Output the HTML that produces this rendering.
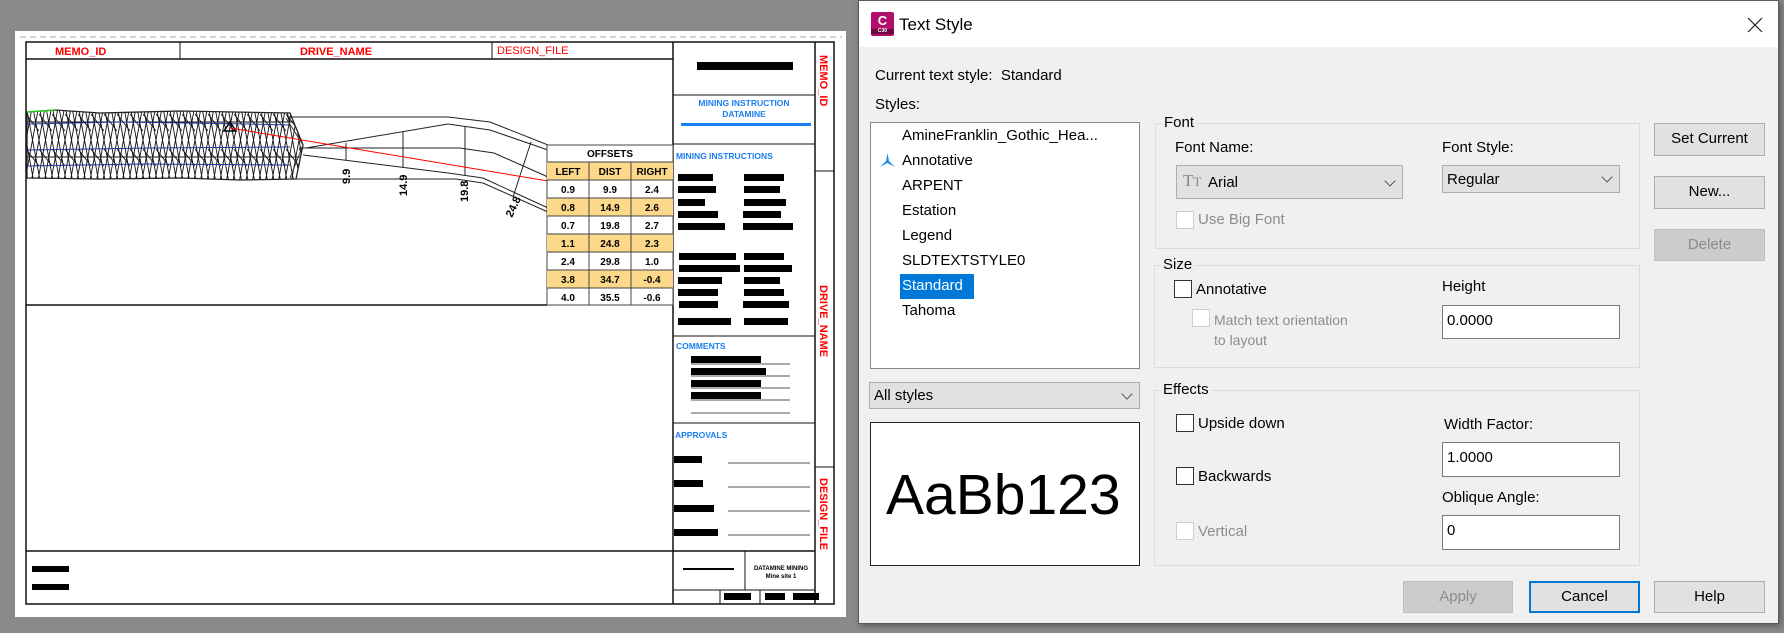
<!DOCTYPE html>
<html><head><meta charset="utf-8"><style>
*{margin:0;padding:0;box-sizing:border-box}
body{width:1784px;height:633px;background:#8a8a8a;position:relative;overflow:hidden;font-family:"Liberation Sans",sans-serif}
.a{position:absolute}
#dlg{left:858px;top:0;width:921px;height:624px;background:#f0f0f0;border:1px solid #5a5a5a;box-shadow:2px 2px 6px rgba(0,0,0,.35)}
#tb{left:0;top:0;width:919px;height:46px;background:#fff}
.t{position:absolute;font-size:15px;color:#000;white-space:nowrap;line-height:18px}
.g{color:#8c8c8c}
.grp{position:absolute;border:1px solid #dcdcdc}
.lbl{position:absolute;top:-10px;left:6px;background:#f0f0f0;padding:0 2px;font-size:15px;line-height:18px}
.cb{position:absolute;width:18px;height:18px;border:1px solid #333;background:#fff}
.cbd{border-color:#cfcfcf}
.in{position:absolute;background:#fff;border:1px solid #7a7a7a;font-size:15px;padding:6px 0 0 4px}
.btn{position:absolute;background:#e1e1e1;border:1px solid #adadad;font-size:15px;text-align:center;line-height:30px}
.cmb{position:absolute;background:#e1e1e1;border:1px solid #adadad;font-size:15px}
.chev{position:absolute;right:8px;top:7px;width:8px;height:8px;border-right:1px solid #555;border-bottom:1px solid #555;transform:rotate(45deg)}
</style></head><body>
<svg class="a" style="left:0;top:0" width="858" height="633" viewBox="0 0 858 633">
<defs>
<pattern id="tri" width="13" height="35" patternUnits="userSpaceOnUse">
<path d="M0 0L6.5 35L13 0M0 35L6.5 0L13 35M0 17L13 17M0 9L13 26" stroke="#111" stroke-width="0.9" fill="none"/>
</pattern>
<clipPath id="cl"><path d="M27 112L55 110L100 113L180 111L290 113L303 145L296 179L240 180L180 178L100 179L27 178Z"/></clipPath>
</defs>
<rect x="15" y="31" width="831" height="586" fill="#fff"/>
<line x1="20" y1="37" x2="842" y2="37" stroke="#aaa" stroke-dasharray="6,4"/>
<g stroke="#111" fill="none">
<rect x="26" y="42" width="808" height="562" stroke-width="1.5"/>
<line x1="26" y1="59" x2="673" y2="59" stroke-width="1.5"/>
<line x1="180" y1="42" x2="180" y2="59"/>
<line x1="492" y1="42" x2="492" y2="59"/>
<line x1="673" y1="42" x2="673" y2="604" stroke-width="1.5"/>
<line x1="815" y1="42" x2="815" y2="604" stroke-width="1.5"/>
<line x1="815" y1="171" x2="834" y2="171"/>
<line x1="815" y1="467" x2="834" y2="467"/>
<line x1="673" y1="95" x2="815" y2="95"/>
<line x1="673" y1="144" x2="815" y2="144"/>
<line x1="673" y1="336" x2="815" y2="336"/>
<line x1="673" y1="423" x2="815" y2="423"/>
<line x1="26" y1="305" x2="547" y2="305" stroke-width="1.5"/>
<line x1="26" y1="551" x2="815" y2="551" stroke-width="1.5"/>
<line x1="745" y1="551" x2="745" y2="590"/>
<line x1="673" y1="590" x2="815" y2="590"/>
<line x1="720" y1="590" x2="720" y2="604"/>
<line x1="760" y1="590" x2="760" y2="604"/>
</g>
<g font-family="Liberation Sans" font-weight="bold" font-size="11" fill="#f00">
<text x="55" y="55">MEMO_ID</text>
<text x="336" y="55" text-anchor="middle">DRIVE_NAME</text>
<text x="497" y="54" font-weight="normal">DESIGN_FILE</text>
<text transform="translate(820,55) rotate(90)">MEMO_ID</text>
<text transform="translate(820,285) rotate(90)">DRIVE_NAME</text>
<text transform="translate(820,478) rotate(90)">DESIGN_FILE</text>
</g>
<rect x="20" y="105" width="290" height="80" fill="url(#tri)" clip-path="url(#cl)"/>
<path d="M27 112L55 110L100 113L180 111L290 113L303 145L296 179L240 180L180 178L100 179L27 178Z" fill="none" stroke="#222" stroke-width="1.3"/>
<path d="M27 124L120 122L250 124L290 125M27 150L150 148L290 147M27 166L140 164L290 165" stroke="#223399" fill="none" stroke-width="1"/>
<path d="M27 112L55 110" stroke="#2c2" stroke-width="1.5"/>
<path d="M286 118L303 145L290 178" stroke="#333" fill="none"/>
<polygon points="230,122 236,131 224,131" fill="none" stroke="#000" stroke-width="1.5"/>
<g stroke="#222" fill="none" stroke-width="1">
<path d="M287 117L448 117L490 122L548 145"/>
<path d="M306 148L448 124L490 130L548 150"/>
<path d="M299 148L460 148L494 153L548 177"/>
<path d="M303 155L448 173L483 178L548 208"/>
<path d="M291 179L456 179L483 183L548 212"/>
<path d="M346 143L346 160M403 132L403 167M465 126L465 175M531 142L513 197"/>
</g>
<path d="M230 128L548 181" stroke="#f00" stroke-width="1"/>
<g font-family="Liberation Sans" font-weight="bold" font-size="11" fill="#000">
<text transform="translate(350,184) rotate(-90)">9.9</text>
<text transform="translate(407,196) rotate(-90)">14.9</text>
<text transform="translate(468,202) rotate(-90)">19.8</text>
<text transform="translate(512,218) rotate(-65)">24.8</text>
</g>
<rect x="547" y="145" width="126" height="160" fill="#fff" stroke="#444"/>
<g fill="#fcd98a"><rect x="547" y="162" width="126" height="18"/><rect x="547" y="198" width="126" height="18"/><rect x="547" y="234" width="126" height="18"/><rect x="547" y="270" width="126" height="18"/></g>
<g stroke="#444" fill="none">
<path d="M547 162H673M547 180H673M547 198H673M547 216H673M547 234H673M547 252H673M547 270H673M547 288H673M589 162V305M631 162V305"/>
</g>
<g font-family="Liberation Sans" font-weight="bold" font-size="10" fill="#000" text-anchor="middle">
<text x="610" y="157">OFFSETS</text>
<text x="568" y="175">LEFT</text><text x="610" y="175">DIST</text><text x="652" y="175">RIGHT</text>
<text x="568" y="193">0.9</text><text x="610" y="193">9.9</text><text x="652" y="193">2.4</text>
<text x="568" y="211">0.8</text><text x="610" y="211">14.9</text><text x="652" y="211">2.6</text>
<text x="568" y="229">0.7</text><text x="610" y="229">19.8</text><text x="652" y="229">2.7</text>
<text x="568" y="247">1.1</text><text x="610" y="247">24.8</text><text x="652" y="247">2.3</text>
<text x="568" y="265">2.4</text><text x="610" y="265">29.8</text><text x="652" y="265">1.0</text>
<text x="568" y="283">3.8</text><text x="610" y="283">34.7</text><text x="652" y="283">-0.4</text>
<text x="568" y="301">4.0</text><text x="610" y="301">35.5</text><text x="652" y="301">-0.6</text>
</g>
<g fill="#000">
<rect x="697" y="62" width="96" height="8"/>
<rect x="678" y="174" width="35" height="7"/><rect x="678" y="186" width="38" height="7"/><rect x="678" y="199" width="27" height="7"/><rect x="678" y="211" width="40" height="7"/><rect x="678" y="223" width="47" height="7"/>
<rect x="744" y="174" width="40" height="7"/><rect x="744" y="186" width="36" height="7"/><rect x="744" y="199" width="42" height="7"/><rect x="743" y="211" width="38" height="7"/><rect x="743" y="223" width="50" height="7"/>
<rect x="679" y="253" width="57" height="7"/><rect x="679" y="265" width="61" height="7"/><rect x="678" y="277" width="44" height="7"/><rect x="678" y="289" width="40" height="7"/><rect x="679" y="301" width="39" height="7"/><rect x="678" y="318" width="53" height="7"/>
<rect x="744" y="253" width="40" height="7"/><rect x="744" y="265" width="48" height="7"/><rect x="744" y="277" width="36" height="7"/><rect x="744" y="289" width="40" height="7"/><rect x="743" y="301" width="46" height="7"/><rect x="744" y="318" width="44" height="7"/>
<rect x="691" y="356" width="70" height="7"/><rect x="691" y="368" width="75" height="7"/><rect x="691" y="380" width="70" height="7"/><rect x="691" y="392" width="70" height="7"/>
<rect x="674" y="456" width="28" height="7"/><rect x="674" y="480" width="29" height="7"/><rect x="674" y="505" width="40" height="7"/><rect x="674" y="529" width="44" height="7"/>
<rect x="32" y="566" width="37" height="6"/><rect x="32" y="584" width="37" height="6"/>
<rect x="724" y="593" width="27" height="7"/><rect x="765" y="593" width="20" height="7"/><rect x="793" y="593" width="26" height="7"/>
</g>
<g stroke="#777" stroke-width="1.2">
<path d="M691 364H790M691 376H790M691 388H790M691 400H790M691 413H790M728 463H810M728 487H810M728 511H810M728 535H810"/>
</g>
<rect x="681" y="123" width="130" height="3" fill="#1a7ff0"/>
<line x1="683" y1="569" x2="734" y2="569" stroke="#000" stroke-width="2"/>
<g font-family="Liberation Sans" font-weight="bold" font-size="8.5" fill="#1a7ff0">
<text x="744" y="106" text-anchor="middle">MINING INSTRUCTION</text>
<text x="744" y="117" text-anchor="middle">DATAMINE</text>
<text x="676" y="159">MINING INSTRUCTIONS</text>
<text x="676" y="349">COMMENTS</text>
<text x="675" y="438">APPROVALS</text>
</g>
<g font-family="Liberation Sans" font-weight="bold" font-size="6" fill="#000" text-anchor="middle">
<text x="781" y="570">DATAMINE MINING</text><text x="781" y="578">Mine site 1</text>
</g>
</svg>

<div id="dlg" class="a">
<div id="tb" class="a">
<div class="a" style="left:12px;top:11px;width:23px;height:24px;background:#b0106c;border-radius:2px;color:#fff;font-weight:bold;font-size:13px;text-align:center;line-height:17px">C<div style="font-size:5px;line-height:5px;background:#6a0840">C30</div></div>
<div class="t" style="left:40px;top:15px;font-size:17px">Text Style</div>
<svg class="a" style="left:888px;top:16px" width="16" height="16"><path d="M1 1L15 15M15 1L1 15" stroke="#222" stroke-width="1.2"/></svg>
</div>
<div class="t" style="left:16px;top:66px">Current text style:&nbsp; Standard</div>
<div class="t" style="left:16px;top:95px">Styles:</div>
<div class="a" style="left:11px;top:121px;width:270px;height:247px;background:#fff;border:1px solid #828790"></div>
<div class="t" style="left:43px;top:126px">AmineFranklin_Gothic_Hea...</div>
<svg class="a" style="left:20px;top:151px" width="17" height="17"><path d="M8.5 1L10 9L16 15L8.5 11L1 15L7 9Z" fill="#1d8ee6"/></svg>
<div class="t" style="left:43px;top:151px">Annotative</div>
<div class="t" style="left:43px;top:176px">ARPENT</div>
<div class="t" style="left:43px;top:201px">Estation</div>
<div class="t" style="left:43px;top:226px">Legend</div>
<div class="t" style="left:43px;top:251px">SLDTEXTSTYLE0</div>
<div class="a" style="left:41px;top:273px;width:74px;height:25px;background:#0078d7"></div>
<div class="t" style="left:43px;top:276px;color:#fff">Standard</div>
<div class="t" style="left:43px;top:301px">Tahoma</div>
<div class="cmb" style="left:10px;top:381px;width:271px;height:27px"><span class="t" style="left:4px;top:4px">All styles</span><div class="chev"></div></div>
<div class="a" style="left:11px;top:421px;width:270px;height:144px;background:#fff;border:1px solid #222"></div>
<div class="t" style="left:27px;top:464px;font-size:57px;line-height:60px">AaBb123</div>

<div class="grp" style="left:296px;top:122px;width:485px;height:126px"><div class="lbl">Font</div></div>
<div class="t" style="left:316px;top:138px">Font Name:</div>
<div class="t" style="left:583px;top:138px">Font Style:</div>
<div class="cmb" style="left:317px;top:164px;width:227px;height:34px"><span class="t" style="left:6px;top:6px;font-family:'Liberation Serif',serif;color:#888;font-size:17px">T<span style="font-size:13px">T</span></span><span class="t" style="left:31px;top:8px">Arial</span><div class="chev" style="top:11px"></div></div>
<div class="cmb" style="left:583px;top:164px;width:178px;height:28px"><span class="t" style="left:4px;top:5px">Regular</span><div class="chev"></div></div>
<div class="cb cbd" style="left:317px;top:210px"></div>
<div class="t g" style="left:339px;top:210px">Use Big Font</div>

<div class="grp" style="left:295px;top:264px;width:486px;height:103px"><div class="lbl">Size</div></div>
<div class="cb" style="left:315px;top:279px"></div>
<div class="t" style="left:337px;top:280px">Annotative</div>
<div class="cb cbd" style="left:333px;top:308px"></div>
<div class="t g" style="left:355px;top:310px;font-size:14px">Match text orientation</div>
<div class="t g" style="left:355px;top:330px;font-size:14px">to layout</div>
<div class="t" style="left:583px;top:277px">Height</div>
<div class="in" style="left:583px;top:304px;width:178px;height:34px">0.0000</div>

<div class="grp" style="left:295px;top:389px;width:486px;height:176px"><div class="lbl">Effects</div></div>
<div class="cb" style="left:317px;top:413px"></div>
<div class="t" style="left:339px;top:414px">Upside down</div>
<div class="cb" style="left:317px;top:466px"></div>
<div class="t" style="left:339px;top:467px">Backwards</div>
<div class="cb cbd" style="left:317px;top:521px"></div>
<div class="t g" style="left:339px;top:522px">Vertical</div>
<div class="t" style="left:585px;top:415px">Width Factor:</div>
<div class="in" style="left:583px;top:441px;width:178px;height:35px">1.0000</div>
<div class="t" style="left:583px;top:488px">Oblique Angle:</div>
<div class="in" style="left:583px;top:514px;width:178px;height:35px">0</div>

<div class="btn" style="left:795px;top:122px;width:111px;height:33px">Set Current</div>
<div class="btn" style="left:795px;top:175px;width:111px;height:33px">New...</div>
<div class="btn g" style="left:795px;top:228px;width:111px;height:32px;background:#cccccc;border-color:#bfbfbf">Delete</div>
<div class="btn g" style="left:544px;top:580px;width:110px;height:32px;background:#cccccc;border-color:#bfbfbf">Apply</div>
<div class="btn" style="left:670px;top:580px;width:111px;height:32px;border:2px solid #0078d7;line-height:28px">Cancel</div>
<div class="btn" style="left:795px;top:580px;width:111px;height:32px">Help</div>
</div>
</body></html>
